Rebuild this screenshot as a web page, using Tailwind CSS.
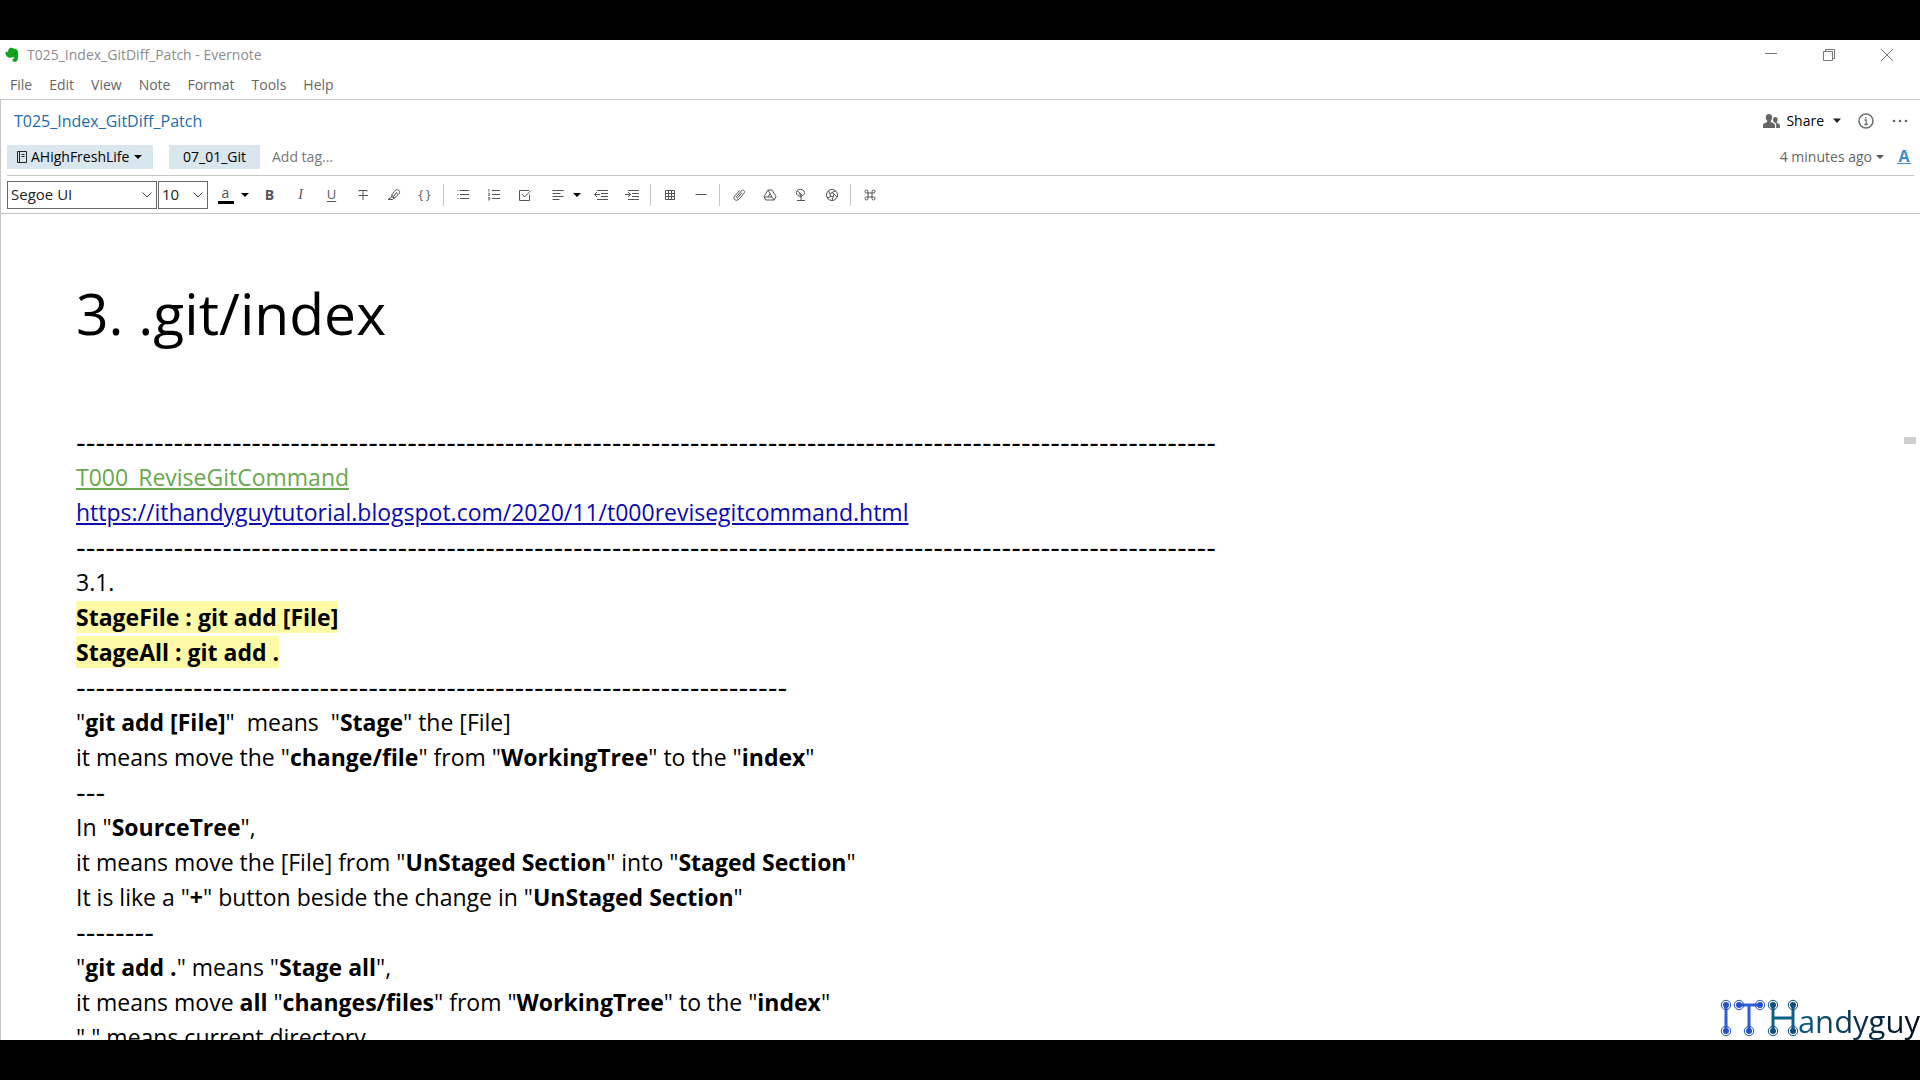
<!DOCTYPE html>
<html lang="en">
<head>
<meta charset="utf-8">
<title>T025_Index_GitDiff_Patch - Evernote</title>
<script src="https://cdn.jsdelivr.net/npm/@tailwindcss/browser@4"></script>
</head>
<body class="h-screen overflow-hidden bg-black py-10 font-['Open_Sans','Noto_Sans',sans-serif] text-black">
<div class="relative flex h-full flex-col overflow-hidden bg-white">

  <!-- Title bar -->
  <header class="flex h-[30px] shrink-0 items-center pl-1 text-sm text-[#8c8c8c]">
    <svg class="h-4 w-4" viewBox="0 0 16 16"><path fill="#14a11f" d="M5.500 1.200C6.500 .5 8.500 .6 9.500 1.500c2.500 .1 4 .7 4.400 3 .5 3 .4 6.500-.6 9-.7 1.700-4.600 1.900-4.900-.2-.2-1.300.6-2 2.200-2-.1-.8-1.300-.8-2-1.300-1 1-2.600 1.200-4.600.2C1.800 9.200 1.200 6.500 1.500 4.800c1.500.2 2.500 0 2.700-.6.2-.8 0-2.200 1.300-3z"/><circle cx="11" cy="6.800" r=".8" fill="#0a5f12"/></svg>
    <span class="ml-[7px]">T025_Index_GitDiff_Patch - Evernote</span>
    <div class="ml-auto flex pr-1 text-[#777]">
      <button aria-label="Minimize" class="flex h-7 w-[58px] items-center justify-center"><svg class="h-3.5 w-3.5" viewBox="0 0 14 14" stroke="currentColor"><path d="M1 5.500h12"/></svg></button>
      <button aria-label="Restore" class="flex h-7 w-[58px] items-center justify-center"><svg class="h-3.5 w-3.5" viewBox="0 0 14 14" fill="none" stroke="currentColor"><path d="M1.500 3.500h9v9h-9zM3.500 3.500v-2h9v9h-2"/></svg></button>
      <button aria-label="Close" class="flex h-7 w-[58px] items-center justify-center"><svg class="h-3.5 w-3.5" viewBox="0 0 14 14" stroke="currentColor"><path d="M1 1l12 12M13 1L1 13"/></svg></button>
    </div>
  </header>

  <!-- Menu bar -->
  <nav class="flex h-[29px] shrink-0 items-center gap-[17px] pl-2.5 text-sm text-[#666]">
    <button>File</button><button>Edit</button><button>View</button><button>Note</button><button>Format</button><button>Tools</button><button>Help</button>
  </nav>

  <div class="flex min-h-0 flex-1 flex-col border-t border-l border-[#c4c4c4]">
    <!-- Note title -->
    <div class="flex h-[42px] shrink-0 items-center pl-[13px] pr-3">
      <h2 class="text-base text-[#1b6cae]">T025_Index_GitDiff_Patch</h2>
      <div class="ml-auto flex items-center">
        <button class="flex items-center text-sm">
          <svg class="mr-1.5 h-4 w-[17px]" viewBox="0 0 17 16" fill="#666"><path d="M6 1c2 0 3.200 1.300 3.200 3.200 0 1.600-.6 2.700-1.400 3.500v1.200l3.200 1.700c.8.500 1 1 1 2V15H0v-2.400c0-1 .2-1.500 1-2l3.200-1.700V7.700C3.400 6.900 2.800 5.800 2.800 4.200 2.800 2.300 4 1 6 1zM12.300 4c1.500 0 2.400 1 2.400 2.400 0 1.200-.4 2-1 2.600v.8l2.300 1.200c.7.400.9.800.9 1.500V15h-3.700v-2.800c0-1.100-.4-1.900-1.300-2.500l-1-.6c-.6-.6-.9-1.400-.9-2.600C10 5 10.800 4 12.300 4z"/></svg>
          Share
          <svg class="ml-2 h-1.5 w-2.5" viewBox="0 0 10 6"><path d="M1 .5h8L5 5z" fill="#222"/></svg>
        </button>
        <button aria-label="Note info" class="ml-4"><svg class="h-4 w-4" viewBox="0 0 16 16" fill="none" stroke="#6d7276"><circle cx="8" cy="8" r="7" stroke-width="1.600"/><path d="M6.500 7h1.700v4.500M6.300 11.500h3.600M7.800 4v1.600" stroke-width="1.300"/></svg></button>
        <button aria-label="More" class="ml-[18px]"><svg class="h-4 w-4" viewBox="0 0 16 16" fill="#666"><circle cx="2" cy="8" r="1.300"/><circle cx="8" cy="8" r="1.300"/><circle cx="14" cy="8" r="1.300"/></svg></button>
      </div>
    </div>

    <!-- Notebook and tags -->
    <div class="mx-1.5 flex h-[34px] shrink-0 items-center border-b border-[#c4c4c4] pb-1 text-sm">
      <button class="flex h-6 w-[146px] items-center bg-[#d9e6ee] pl-2.5">
        <svg class="mr-1 h-3 w-2.5" viewBox="0 0 10 12" fill="none" stroke="#222"><path d="M.5.5h9v11h-9zM2.500 .5v11M4.500 3.500h3M4.500 5.500h3"/></svg>
        AHighFreshLife
        <svg class="ml-[5px] h-1.5 w-2" viewBox="0 0 8 6"><path d="M0 1h8L4 5z"/></svg>
      </button>
      <button class="ml-4 h-6 w-[91px] bg-[#d9e6ee]">07_01_Git</button>
      <button class="ml-3 text-[#777]">Add tag...</button>
      <button class="ml-auto flex items-center text-[#666]">4 minutes ago
        <svg class="ml-1 h-1.5 w-2" viewBox="0 0 8 6"><path d="M0 1h8L4 5z" fill="#555"/></svg>
      </button>
      <button aria-label="Text style" class="mr-[3px] ml-[13px] w-3.5 border-b border-[#3a8fd0] text-base leading-[14px] font-bold text-[#3a8fd0]">A</button>
    </div>

    <!-- Formatting toolbar -->
    <div class="flex h-[38px] shrink-0 items-center border-b border-[#c4c4c4] pl-1.5 text-[#555]">
      <div class="relative">
        <select aria-label="Font" class="block h-7 w-[150px] appearance-none border border-[#666] pl-[3px] text-[15px] text-[#222]"><option>Segoe UI</option></select>
        <svg class="pointer-events-none absolute top-2.5 right-1 h-2 w-3" viewBox="0 0 12 8" fill="none" stroke="#444"><path d="M1.500 1.500L6 6l4.500-4.500"/></svg>
      </div>
      <div class="relative ml-px">
        <select aria-label="Font size" class="block h-7 w-[50px] appearance-none border border-[#666] pl-[3px] text-[15px] text-[#222]"><option>10</option></select>
        <svg class="pointer-events-none absolute top-2.5 right-1 h-2 w-3" viewBox="0 0 12 8" fill="none" stroke="#444"><path d="M1.500 1.500L6 6l4.500-4.500"/></svg>
      </div>
      <button aria-label="Text color" class="ml-0.5 flex w-[31px] flex-col items-center text-sm leading-4"><span>a</span><span class="h-[3px] w-4 bg-black"></span></button>
      <button aria-label="Text color options" class="mr-1 flex w-2 justify-center"><svg class="h-1.5 w-2" viewBox="0 0 8 6"><path d="M0 1h8L4 5z"/></svg></button>
      <button class="ml-px w-[31px] text-sm font-bold">B</button>
      <button class="w-[31px] font-['Liberation_Serif',serif] text-sm italic">I</button>
      <button class="w-[31px] text-[13px] underline underline-offset-2">U</button>
      <button aria-label="Strikethrough" class="flex w-[31px] justify-center"><svg class="h-3.5 w-3.5" viewBox="0 0 14 14" fill="none" stroke="currentColor"><path d="M3 3.500V2.500h8v1M7 2.500v9.500M2.500 7.500h9.500"/></svg></button>
      <button aria-label="Highlight" class="flex w-[31px] justify-center"><svg class="h-3.5 w-3.5" viewBox="0 0 14 14" fill="none" stroke="currentColor"><path d="M5 6.500L8 2.500c1.300-1.300 4-.8 4.500.8.300 1.200 0 2-1 3L7.500 10zM5 6.500L4.500 9 1 11.500h4.500L7.500 10 4.500 9M7 8l2.500-3.500 1 1.500"/></svg></button>
      <button aria-label="Code block" class="w-[31px] text-xs">{ }</button>
      <span class="mx-[3px] h-[22px] w-px bg-[#c4c4c4]"></span>
      <button aria-label="Bulleted list" class="flex w-[31px] justify-center"><svg class="h-3.5 w-3.5" viewBox="0 0 14 14" stroke="currentColor"><path d="M4 2.500h9M4 6.500h9M4 10.500h9M1.500 2.500h1M1.500 6.500h1M1.500 10.500h1"/></svg></button>
      <button aria-label="Numbered list" class="flex w-[31px] justify-center"><svg class="h-3.5 w-3.5" viewBox="0 0 14 14" fill="none" stroke="currentColor"><path d="M5 2.500h8M5 6.500h8M5 10.500h8"/><path d="M1 1.500h1v3M1 5.500h1.700v1L1 7.500h2M1 9.500h1.700v2.500H1M1 10.700h1.500" stroke-width=".7"/></svg></button>
      <button aria-label="Checkbox" class="flex w-[31px] justify-center"><svg class="h-3.5 w-3.5" viewBox="0 0 14 14" fill="none" stroke="currentColor"><path d="M11 2.500H1.500v10h10V6.500M4 6l2.500 3L13 2.500"/></svg></button>
      <button aria-label="Align" class="ml-0.5 flex w-[31px] justify-center"><svg class="h-3.5 w-3.5" viewBox="0 0 14 14" stroke="currentColor"><path d="M1.500 2.500h11M1.500 5.500h8M1.500 8.500h11M1.500 11.500h7"/></svg></button>
      <button aria-label="Align options" class="mr-1 flex w-2 justify-center"><svg class="h-1.5 w-2" viewBox="0 0 8 6"><path d="M0 1h8L4 5z"/></svg></button>
      <button aria-label="Outdent" class="flex w-[31px] justify-center"><svg class="h-3.5 w-3.5" viewBox="0 0 14 14" fill="none" stroke="currentColor"><path d="M3 2.500h11M7 5.500h7M7 8.500h7M3 11.500h11M6 6.500H.5M3 4L.5 6.500 3 9"/></svg></button>
      <button aria-label="Indent" class="flex w-[31px] justify-center"><svg class="h-3.5 w-3.5" viewBox="0 0 14 14" fill="none" stroke="currentColor"><path d="M3 2.500h11M7 5.500h7M7 8.500h7M3 11.500h11M0 6.500h5.500M3 4l2.500 2.500L3 9"/></svg></button>
      <span class="mx-[3px] h-[22px] w-px bg-[#c4c4c4]"></span>
      <button aria-label="Table" class="flex w-[31px] justify-center"><svg class="h-3.5 w-3.5" viewBox="0 0 14 14" fill="none" stroke="currentColor"><path d="M2.500 2.500h9v9h-9zM5.500 2.500v9M8.500 2.500v9M2.500 5.500h9M2.500 8.500h9"/></svg></button>
      <button aria-label="Horizontal line" class="flex w-[31px] justify-center"><svg class="h-3.5 w-3.5" viewBox="0 0 14 14" stroke="currentColor"><path d="M1.500 6.500h11"/></svg></button>
      <span class="mx-[3px] h-[22px] w-px bg-[#c4c4c4]"></span>
      <button aria-label="Attach file" class="flex w-[31px] justify-center"><svg class="h-3.5 w-3.5" viewBox="0 0 14 14" fill="none" stroke="currentColor"><path d="M10 4.500L6 9.500c-.9.900-2 0-1.200-1.100l4.700-5.600c1.400-1.500 4 .2 2.700 2.200l-5 6c-2.600 2.800-7 .4-4.600-2.800L7.500 2.500"/></svg></button>
      <button aria-label="Google Drive" class="flex w-[31px] justify-center"><svg class="h-3.5 w-3.5" viewBox="0 0 14 14" fill="none" stroke="currentColor"><path d="M5 2h4l4 6.500L11.300 12H2.700L1 8.500zM5 9l2-3.500L9 9zM5 2l2 3.500M1.500 9H5M9 9l2.300 3"/></svg></button>
      <button aria-label="Record audio" class="flex w-[31px] justify-center"><svg class="h-3.5 w-3.5" viewBox="0 0 14 14" fill="none" stroke="currentColor"><path d="M2.500 3C1.500 5 3 7.500 5 8c1.500.3 2.500.2 3.500-.5L3 2.500C5 .8 8.500 1 10 3c1.300 1.800.5 4-1.500 4.500M5.500 5l1.500 4v3.500M3 12.500h8M8.500 7.500L7 9"/></svg></button>
      <button aria-label="Camera" class="flex w-[31px] justify-center"><svg class="h-3.5 w-3.5" viewBox="0 0 14 14" fill="none" stroke="currentColor"><circle cx="7" cy="7" r="5.500"/><path d="M5 6L7 4.500 9 6l-.7 2.500H5.700zM7 4.500L10.500 3M9 6l3 3M8.300 8.500L7 12.500M5.700 8.500L2 10M5 6L3.500 3"/></svg></button>
      <span class="mx-[3px] h-[22px] w-px bg-[#c4c4c4]"></span>
      <button aria-label="Shortcuts" class="flex w-[31px] justify-center"><svg class="h-3 w-3" viewBox="1 1 12 12" fill="none" stroke="currentColor"><path d="M5 5h4v4H5zM5 5H3.700A1.500 1.500 0 1 1 5 3.700zM9 5V3.700A1.500 1.500 0 1 1 10.300 5zM9 9h1.300A1.500 1.500 0 1 1 9 10.300zM5 9v1.300A1.500 1.500 0 1 1 3.700 9z"/></svg></button>
    </div>

    <!-- Note body -->
    <main class="min-h-0 flex-1 overflow-hidden pt-[58px] pl-[75px] text-[23px] leading-[35px] whitespace-nowrap">
      <h1 class="mb-[71px] text-[57px] leading-[82px]">3. .git/index</h1>
      <p class="font-['DejaVu_Sans',sans-serif] text-[27px] leading-[35px]">---------------------------------------------------------------------------------------------------------------------</p>
      <p><a href="#" class="text-[#69a84f] underline">T000_ReviseGitCommand</a></p>
      <p><a href="#" class="text-[#0b0bb0] underline">https://ithandyguytutorial.blogspot.com/2020/11/t000revisegitcommand.html</a></p>
      <p class="font-['DejaVu_Sans',sans-serif] text-[27px] leading-[35px]">---------------------------------------------------------------------------------------------------------------------</p>
      <p>3.1.</p>
      <p><b class="bg-[#fffaa5]">StageFile : git add [File]</b></p>
      <p><b class="bg-[#fffaa5]">StageAll : git add .</b></p>
      <p class="font-['DejaVu_Sans',sans-serif] text-[27px] leading-[35px]">-------------------------------------------------------------------------</p>
      <p>"<b>git add [File]</b>"&nbsp; means&nbsp; "<b>Stage</b>" the [File]</p>
      <p>it means move the "<b>change/file</b>" from "<b>WorkingTree</b>" to the "<b>index</b>"</p>
      <p class="font-['DejaVu_Sans',sans-serif] text-[27px] leading-[35px]">---</p>
      <p>In "<b>SourceTree</b>",</p>
      <p>it means move the [File] from "<b>UnStaged Section</b>" into "<b>Staged Section</b>"</p>
      <p>It is like a "<b>+</b>" button beside the change in "<b>UnStaged Section</b>"</p>
      <p class="font-['DejaVu_Sans',sans-serif] text-[27px] leading-[35px]">--------</p>
      <p>"<b>git add .</b>" means "<b>Stage all</b>",</p>
      <p>it means move <b>all</b> "<b>changes/files</b>" from "<b>WorkingTree</b>" to the "<b>index</b>"</p>
      <p>"." means current directory</p>
    </main>
  </div>

  <!-- Scroll thumb -->
  <div class="absolute top-[397px] right-1 h-[7px] w-3 bg-[#cfcfcf]"></div>

  <!-- Watermark -->
  <div class="absolute right-0 bottom-0 flex h-[42px] items-start">
    <svg class="h-[42px] w-[78px]" viewBox="0 0 78 42" fill="none">
      <g stroke="#2d5fd6" stroke-width="3"><path d="M6 7v26M19 7h21M29 7v26"/></g>
      <g stroke="#0f5f8c" stroke-width="3"><path d="M53 7v26M73 7v26M53 20h20"/></g>
      <g fill="#2450c8"><circle cx="6" cy="7" r="3"/><circle cx="6" cy="33" r="3"/><circle cx="19" cy="7" r="3"/><circle cx="40" cy="7" r="3"/><circle cx="29" cy="33" r="3"/></g>
      <g fill="#0b4f80"><circle cx="53" cy="7" r="3"/><circle cx="53" cy="33" r="3"/><circle cx="73" cy="7" r="3"/><circle cx="73" cy="33" r="3"/></g>
      <g stroke="#2450c8"><circle cx="6" cy="7" r="4.700"/><circle cx="6" cy="33" r="4.700"/><circle cx="19" cy="7" r="4.700"/><circle cx="40" cy="7" r="4.700"/><circle cx="29" cy="33" r="4.700"/></g>
      <g stroke="#0b4f80"><circle cx="53" cy="7" r="4.700"/><circle cx="53" cy="33" r="4.700"/><circle cx="73" cy="7" r="4.700"/><circle cx="73" cy="33" r="4.700"/></g>
    </svg>
    <span class="bg-linear-to-r from-[#0c6088] to-[#030c18] bg-clip-text pt-0.5 text-[31px] leading-[42px] text-transparent">andyguy</span>
  </div>
</div>
</body>
</html>
